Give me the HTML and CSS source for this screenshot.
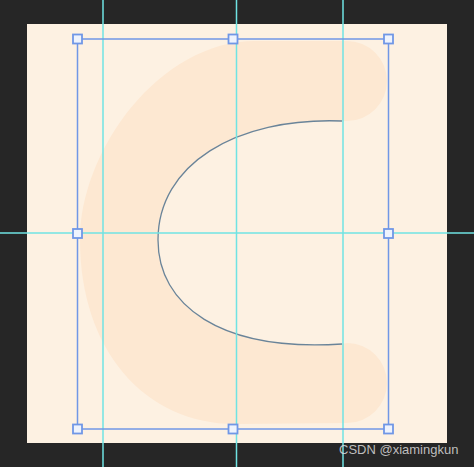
FILE: index.html
```html
<!DOCTYPE html>
<html>
<head>
<meta charset="utf-8">
<link rel="stylesheet" href="styles.css">
</head>
<body>
<div class="stage">
  <svg class="art" width="474" height="467" viewBox="0 0 474 467" xmlns="http://www.w3.org/2000/svg">
    <rect class="paper" x="27" y="24" width="420" height="419"/>
    <path class="glyph" d="M347 41 A40 40 0 0 1 347 121 L342 121 C235 117 158 165 158 240 C158 305 220 352 342 344 L347 343 A40 40 0 0 1 347 423 L235 424 C145 424 80 350 80 240 C80 150 160 41 255 41 Z"/>
    <path class="inner" d="M342 121 C235 117 158 165 158 240 C158 305 220 352 342 344"/>
    <g class="guides">
      <line x1="103" y1="0" x2="103" y2="467"/>
      <line x1="236.5" y1="0" x2="236.5" y2="467"/>
      <line x1="343" y1="0" x2="343" y2="467"/>
      <line x1="0" y1="233" x2="474" y2="233"/>
    </g>
    <rect class="bbox" x="77.5" y="39" width="311" height="390"/>
    <g class="handles">
      <rect x="73" y="34.5" width="9" height="9"/>
      <rect x="228.5" y="34.5" width="9" height="9"/>
      <rect x="384" y="34.5" width="9" height="9"/>
      <rect x="73" y="229" width="9" height="9"/>
      <rect x="384" y="229" width="9" height="9"/>
      <rect x="73" y="424.5" width="9" height="9"/>
      <rect x="228.5" y="424.5" width="9" height="9"/>
      <rect x="384" y="424.5" width="9" height="9"/>
    </g>
  </svg>
  <div class="watermark">CSDN @xiamingkun</div>
</div>
</body>
</html>
```

FILE: styles.css
```css
html, body {
  margin: 0;
  padding: 0;
  background: #262626;
}
.stage {
  position: relative;
  width: 474px;
  height: 467px;
  overflow: hidden;
}
.art {
  display: block;
}
.paper {
  fill: #fdf1e2;
}
.glyph {
  fill: #fde8d2;
}
.inner {
  fill: none;
  stroke: #6a8499;
  stroke-width: 1.3;
}
.guides line {
  stroke: #6fe3e3;
  stroke-width: 1.5;
}
.bbox {
  fill: none;
  stroke: #7097e6;
  stroke-width: 1.5;
}
.handles rect {
  fill: #eef3fd;
  stroke: #7097e6;
  stroke-width: 1.8;
}
.watermark {
  position: absolute;
  left: 339px;
  top: 442px;
  font-family: "Liberation Sans", Arial, sans-serif;
  font-size: 13px;
  line-height: 16px;
  color: rgba(220, 220, 220, 0.85);
  white-space: nowrap;
}
```
